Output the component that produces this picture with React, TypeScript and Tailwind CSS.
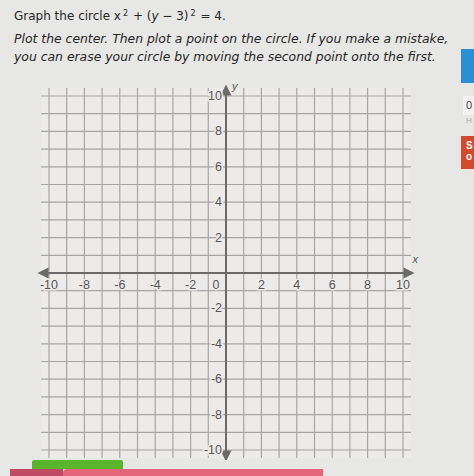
import React from 'react';

const U = 17.7;
const OX = 226;
const OY = 206;
const ticks = Array.from({ length: 21 }, (_, i) => i - 10);
const labels = [-10, -8, -6, -4, -2, 2, 4, 6, 8, 10];

const px = (v: number) => OX + v * U;
const py = (v: number) => OY - v * U;

const Graph: React.FC = () => {
  const ext = 10.45;
  const tip = 10.65;
  return (
    <svg width={460} height={393} className="block" style={{ fontFamily: '"Liberation Sans", Arial, sans-serif' }}>
      <rect x={px(-ext)} y={py(ext)} width={ext * 2 * U} height={ext * 2 * U} fill="#ecebea" />
      {ticks.map((t) => (
        <line key={`v${t}`} x1={px(t)} y1={py(ext)} x2={px(t)} y2={py(-ext)} stroke="#a6a6a6" strokeWidth={1.2} />
      ))}
      {ticks.map((t) => (
        <line key={`h${t}`} x1={px(-ext)} y1={py(t)} x2={px(ext)} y2={py(t)} stroke="#a6a6a6" strokeWidth={1.2} />
      ))}
      {/* axes */}
      <line x1={px(-tip) + 8} y1={OY} x2={px(tip) - 8} y2={OY} stroke="#6a6a6a" strokeWidth={2} />
      <line x1={OX} y1={py(tip) + 8} x2={OX} y2={py(-tip) - 8} stroke="#6a6a6a" strokeWidth={2} />
      <polygon points={`${px(-tip)},${OY} ${px(-tip) + 11},${OY - 5.5} ${px(-tip) + 11},${OY + 5.5}`} fill="#6a6a6a" />
      <polygon points={`${px(tip)},${OY} ${px(tip) - 11},${OY - 5.5} ${px(tip) - 11},${OY + 5.5}`} fill="#6a6a6a" />
      <polygon points={`${OX},${py(tip)} ${OX - 5.5},${py(tip) + 11} ${OX + 5.5},${py(tip) + 11}`} fill="#6a6a6a" />
      <polygon points={`${OX},${py(-tip)} ${OX - 5.5},${py(-tip) - 11} ${OX + 5.5},${py(-tip) - 11}`} fill="#6a6a6a" />
      <text x={px(tip) - 2} y={OY - 10} fontSize={11} fontStyle="italic" fill="#555">x</text>
      <text x={OX + 6} y={py(tip) + 6} fontSize={11} fontStyle="italic" fill="#555">y</text>
      {labels.map((l) => (
        <text
          key={`xl${l}`}
          x={px(l)}
          y={OY + 16}
          fontSize={12.5}
          textAnchor="middle"
          fill="#555"
          stroke="#ecebea"
          strokeWidth={3}
          paintOrder="stroke"
        >
          {l}
        </text>
      ))}
      {labels.map((l) => (
        <text
          key={`yl${l}`}
          x={OX - 4}
          y={py(l) + 4}
          fontSize={12.5}
          textAnchor="end"
          fill="#555"
          stroke="#ecebea"
          strokeWidth={3}
          paintOrder="stroke"
        >
          {l}
        </text>
      ))}
      <text x={OX - 10} y={OY + 16} fontSize={12.5} textAnchor="middle" fill="#555" stroke="#ecebea" strokeWidth={3} paintOrder="stroke">
        0
      </text>
    </svg>
  );
};

export default function App() {
  return (
    <div className="w-[474px] h-[476px] overflow-hidden bg-[#e7e7e5] flex flex-col">
      <div className="flex flex-1 min-h-0">
        <div className="w-[460px] shrink-0 flex flex-col">
          <div className="h-[67px] pl-[14px] pt-[8px] font-['DejaVu_Sans',Verdana,sans-serif] text-[#262626]">
            <p className="text-[12px] leading-[16px] whitespace-nowrap">
              Graph the circle x<sup className="text-[8px] ml-[2px] mr-px">2</sup> + (<i>y</i> − 3)
              <sup className="text-[8px] ml-[2px] mr-px">2</sup> = 4.
            </p>
            <p className="mt-[6px] text-[12.4px] leading-[18px] italic whitespace-nowrap">
              Plot the center. Then plot a point on the circle. If you make a mistake,
              <br />
              you can erase your circle by moving the second point onto the first.
            </p>
          </div>
          <Graph />
        </div>
        <div className="flex-1 pl-px pt-[49px] flex flex-col overflow-hidden font-['Liberation_Sans',Arial,sans-serif]">
          <div className="h-[34px] bg-[#2b8fd3]" />
          <div className="mt-[13px] ml-[2px] h-[19px] bg-[#f3f3f1] text-[11px] leading-[19px] text-[#444] pl-[3px]">0</div>
          <div className="ml-[2px] mt-px text-[8px] leading-[10px] text-[#aaa] pl-[3px]">H</div>
          <div className="mt-[10px] h-[33px] bg-[#d24a2b] text-white text-[10px] leading-[11px] pl-[5px] pt-[4px] font-bold">
            S<br />o
          </div>
        </div>
      </div>
      <div className="h-[16px] shrink-0 flex flex-col">
        <div className="ml-[32px] w-[91px] h-[9px] bg-[#58b52c] rounded-t-[2px]" />
        <div className="flex h-[7px]">
          <div className="ml-[10px] w-[53px] bg-[#c04a64]" />
          <div className="w-[260px] bg-[#e46479] rounded-tl-[4px]" />
        </div>
      </div>
    </div>
  );
}
